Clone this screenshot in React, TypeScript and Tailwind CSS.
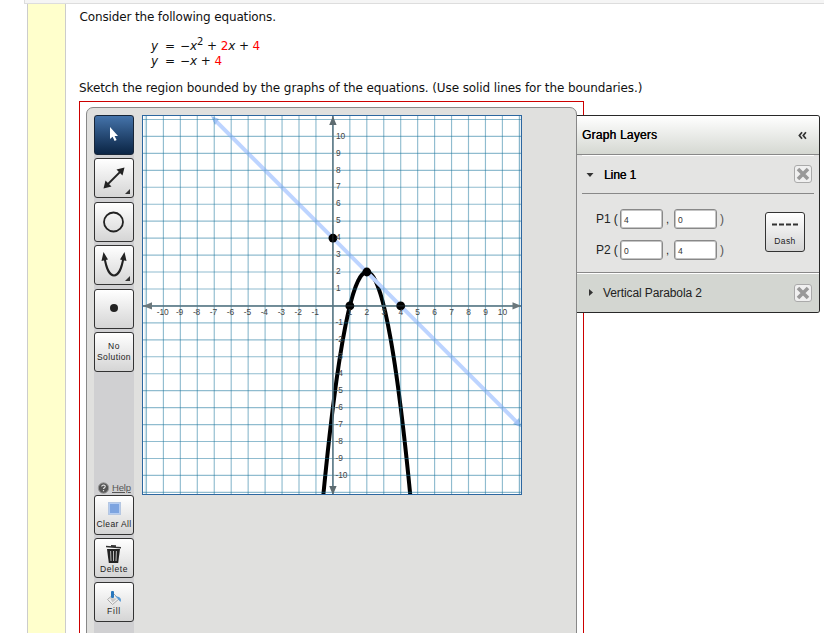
import React from "react";

const STEP = 16.95;
const CX = 190.9;
const CY = 190.9;
const px = (x: number) => CX + x * STEP;
const py = (y: number) => CY - y * STEP;
const units = Array.from({ length: 23 }, (_, i) => i - 11);

function parabola() {
  let d = "";
  for (let x = -0.6; x <= 4.62; x += 0.05) {
    d += `${d ? "L" : "M"}${px(x).toFixed(2)} ${py(-2 * (x - 2) * (x - 2) + 2).toFixed(2)}`;
  }
  return d;
}

function Graph() {
  return (
    <div className="h-[380px] w-[380px] shrink-0 overflow-hidden border border-[#2d67a0] bg-white">
      <svg width="378" height="378" viewBox="1 1 378 378" className="block">
        <path d={parabola()} fill="none" stroke="#000" strokeWidth="4" />
        <path d={`M${px(-7)} ${py(11)}L${px(11)} ${py(-7)}`} stroke="#c4d9ff" strokeWidth="3.8" />
        <path d="M69 1l8 3-4 6zM379 312l-8-3 6-6z" fill="#8fb5ee" fillOpacity="0.8" />
        {units.map((u) => (
          <g key={u} stroke="#16749b" strokeOpacity="0.48" strokeWidth="1.15">
            <path d={`M${px(u)} 0V380`} />
            <path d={`M0 ${py(u)}H380`} />
          </g>
        ))}
        <path d="M3.200 0V380M378 0V380" stroke="#16749b" strokeOpacity="0.25" />
        <path d={`M${px(-7)} ${py(11)}L${px(11)} ${py(-7)}`} stroke="#b4ceff" strokeOpacity="0.4" strokeWidth="3.8" />
        <g stroke="#5b7681" strokeWidth="1.5" fill="none">
          <path d={`M0 ${CY}H380M${CX} 0V380`} />
        </g>
        <path d="M1 190.9l9-3.7v7.4zM379.5 190.9l-9-3.7v7.4z" fill="#6b777c" />
        <path d="M190.9 1l-3.7 9h7.4zM190.9 380l-3.7-9h7.4z" fill="#5d6b70" />
        <g fill="#000">
          <circle cx={px(0)} cy={py(4)} r="4.4" />
          <circle cx={px(1)} cy={py(0)} r="4.4" />
          <circle cx={px(2)} cy={py(2)} r="4.4" />
          <circle cx={px(4)} cy={py(0)} r="4.4" />
        </g>
        <path d={`M${CX} 110V136M145 ${CY}H265`} stroke="#5b7681" strokeOpacity="0.4" />
        <g className="font-['Liberation_Sans',Arial,sans-serif] text-[8.4px]" fill="#444">
          {units
            .filter((u) => u !== 0 && Math.abs(u) < 11)
            .map((u) => (
              <g key={u}>
                <text x={px(u) - (u < 0 ? 0.8 : 0)} y="200.3" textAnchor="middle">
                  {u}
                </text>
                <text x={u < 0 ? 193.5 : 194} y={py(u) + 2.2}>
                  {u}
                </text>
              </g>
            ))}
        </g>
      </svg>
    </div>
  );
}

function Tool({ children, active, corner }: { children?: React.ReactNode; active?: boolean; corner?: boolean }) {
  return (
    <button
      className={`relative flex h-10 w-10 shrink-0 flex-col items-center justify-center rounded-[3px] border ${
        active
          ? "border-[#182638] bg-linear-to-b from-[#4574ab] to-[#0b2545]"
          : "border-[#333] bg-linear-to-b from-white to-[#d5d5d5]"
      }`}
    >
      {children}
      {corner && (
        <svg className="absolute bottom-[3px] right-[3px]" width="5" height="5">
          <path d="M5 0V5H0z" fill="#333" />
        </svg>
      )}
    </button>
  );
}

function Label({ children, className = "" }: { children: React.ReactNode; className?: string }) {
  return (
    <span className={`whitespace-nowrap font-['Liberation_Sans',Arial,sans-serif] text-[8.5px] leading-[11px] text-[#222] ${className}`}>
      {children}
    </span>
  );
}

function Toolbar() {
  return (
    <div className="flex h-[526px] w-10 shrink-0 flex-col bg-[#d0d0d2] pb-[19px]">
      <div className="flex flex-col gap-[3.4px]">
        <Tool active>
          <svg width="10" height="16" viewBox="0 0 10 16">
            <path d="M1 0v12l2.600-2.200L5.600 14l2-.9-2-4.100H9z" fill="#fff" />
          </svg>
        </Tool>
        <Tool corner>
          <svg width="24" height="24" viewBox="0 0 24 24">
            <path d="M4 20L20 4" stroke="#222" strokeWidth="1.8" />
            <path d="M1.500 22.500l2-8 6 6zM22.500 1.500l-8 2 6 6z" fill="#222" />
          </svg>
        </Tool>
        <Tool>
          <svg width="24" height="24">
            <circle cx="11.5" cy="12" r="9.5" fill="none" stroke="#222" strokeWidth="1.8" />
          </svg>
        </Tool>
        <Tool corner>
          <svg width="26" height="26" viewBox="0 0 26 26">
            <path d="M3.500 5C7 29.500 19 29.500 22.500 5" fill="none" stroke="#222" strokeWidth="2" />
            <path d="M2.500 0L.5 9l6.500-1.500zM23.500 0L19 7.500l6.500 1.500z" fill="#222" />
          </svg>
        </Tool>
        <Tool>
          <span className="-mt-px h-2 w-2 rounded-full bg-[#222]" />
        </Tool>
        <Tool>
          <Label className="mt-[1px] tracking-[0.5px]">No</Label>
          <Label className="tracking-[0.4px]">Solution</Label>
        </Tool>
      </div>
      <div className="mt-auto flex h-[14px] items-center gap-[2px] pl-[3px] font-['Liberation_Sans',Arial,sans-serif] text-[9.5px] tracking-[-0.2px] text-[#555]">
        <svg width="13" height="12" viewBox="0 0 12 12">
          <circle cx="6" cy="6" r="5.200" fill="#555" stroke="#999" />
          <path d="M4.200 4.600C4.200 2.500 8 2.700 7.700 4.700C7.500 5.800 6 5.700 6 7.100M6 8.100v1.200" stroke="#ddd" strokeWidth="1.200" fill="none" />
        </svg>
        <span className="underline underline-offset-1">Help</span>
      </div>
      <div className="flex flex-col">
        <Tool>
          <svg className="mt-[2px]" width="13" height="13">
            <rect x=".5" y=".5" width="12" height="12" fill="#b5cdf2" stroke="#b5c7e2" />
            <rect x="2" y="2" width="9" height="9" fill="#7da4e0" />
          </svg>
          <Label className="mt-[4px] tracking-[0.35px]">Clear All</Label>
        </Tool>
        <div className="mb-1 mt-[3px] flex">
          <Tool>
            <svg className="mt-[3px] -ml-[2px]" width="15" height="19" viewBox="0 0 15 19">
              <path d="M0 2.500l15 1.300M5 1.600L10 2" stroke="#333" strokeWidth="1.400" />
              <path d="M1 5h13l-1.800 14H2.800z" fill="#222" />
              <path d="M4.600 7l.4 10M7.500 7v10M10.400 7L10 17" stroke="#bbb" strokeWidth="1" />
            </svg>
            <Label className="mt-px tracking-[0.6px]">Delete</Label>
          </Tool>
        </div>
        <Tool>
          <svg className="mt-[3px]" width="16" height="16" viewBox="0 0 16 16">
            <path d="M1.500 9.500L8 4l5 5-6.500 5.500z" fill="#eee" stroke="#aaa" />
            <path d="M4 8l7 .5-4.500 4z" fill="#c8c8c8" />
            <path d="M9 6l4 1q3 2 1.500 5L11 8z" fill="#5a9bd5" />
            <rect x="5" y="1" width="3" height="7" rx="1" fill="#2877bd" />
          </svg>
          <Label className="tracking-[0.8px]">Fill</Label>
        </Tool>
      </div>
    </div>
  );
}

function CloseButton() {
  return (
    <button className="flex h-[18px] w-[18px] items-center justify-center rounded-[3px] border border-[#aaa] bg-[#f0f0f0]">
      <svg width="14" height="14" viewBox="0 0 14 14" className="shrink-0">
        <path d="M2 2l10 10M12 2L2 12" stroke="#999" strokeWidth="3.600" />
      </svg>
    </button>
  );
}

function PointRow({ name, x, y }: { name: string; x: string; y: string }) {
  const box =
    "flex h-5 w-[43px] items-center rounded-[3px] border border-[#888] bg-white pl-[3px] pt-px text-[8.5px] text-[#333] shadow-[inset_0_0_0_1px_#c4c4c4]";
  return (
    <div className="flex h-5 items-center">
      <span className="w-6 whitespace-pre">{name} (</span>
      <span className={box}>{x}</span>
      <span className="w-[11px] pl-[3px] text-[11px]">,</span>
      <span className={box}>{y}</span>
      <span className="pl-[3px] text-[#555]">)</span>
    </div>
  );
}

function Layers() {
  return (
    <div className="mt-2 h-[198px] w-[243px] shrink-0 overflow-hidden rounded-r-[3px] border border-l-0 border-[#282828] bg-[#e4e4e3] font-['Liberation_Sans',Arial,sans-serif] text-[12px] text-[#222]">
      <div className="flex h-[39px] items-center justify-between border-b border-[#888] bg-linear-to-b from-white to-[#d5d8d2] pl-[5px] pr-[12px] text-[12px] tracking-[0.2px] text-black [text-shadow:0.3px_0_0_black]">
        <span>Graph Layers</span>
        <svg width="9" height="9" viewBox="0 0 10 9" fill="none" stroke="#333" strokeWidth="1.900">
          <path d="M4.500 .8L1.500 4.500l3 3.700M8.800 .8L5.800 4.500l3 3.700" />
        </svg>
      </div>
      <div className="mx-[5px] flex h-[39px] items-center border-b border-t border-b-[#888] border-t-white pr-[2px]">
        <svg className="ml-[4px] mr-[10px]" width="8" height="4">
          <path d="M.5 0H7.500L4 4z" fill="#333" />
        </svg>
        <span className="flex-1 text-black [text-shadow:0.3px_0_0_black]">Line 1</span>
        <div className="-mt-[2px]">
          <CloseButton />
        </div>
      </div>
      <div className="flex h-[79px] items-center border-b border-[#888] pl-[19px]">
        <div className="flex flex-col gap-[11px] pt-[3px]">
          <PointRow name="P1" x="4" y="0" />
          <PointRow name="P2" x="0" y="4" />
        </div>
        <div className="-mt-[2px] ml-auto mr-[14px]">
          <Tool>
            <svg className="mt-[6px]" width="26" height="3">
              <path d="M0 1.500H26" stroke="#333" strokeWidth="2" strokeDasharray="5 2" />
            </svg>
            <Label className="mt-[10px] tracking-[0.4px]">Dash</Label>
          </Tool>
        </div>
      </div>
      <div className="flex h-10 items-center border-t border-white bg-[#d3d6d1] pb-[2px] pl-[12px] pr-[7px]">
        <svg className="mr-[10px]" width="4" height="7">
          <path d="M0 0V7L4 3.500z" fill="#333" />
        </svg>
        <span className="flex-1 pt-px tracking-[-0.1px]">Vertical Parabola 2</span>
        <CloseButton />
      </div>
    </div>
  );
}

function Num({ children }: { children: React.ReactNode }) {
  return <span className="text-[#f00]">{children}</span>;
}

export default function App() {
  return (
    <div className="flex h-[633px] w-[824px] flex-col overflow-hidden bg-white font-['DejaVu_Sans',Verdana,sans-serif] text-[12px] leading-4 tracking-[-0.1px] text-[#111]">
      <div className="ml-6 h-1 shrink-0 border-b border-l border-[#ddd] bg-[#f5f5f5]" />
      <div className="flex min-h-0 flex-1 pl-[27px]">
        <div className="w-[39px] shrink-0 border-x border-[#ccc] bg-[#ffffcc]" />
        <div className="ml-[13px] flex shrink-0 flex-col">
          <p className="mt-[5px] h-4 whitespace-nowrap pl-[0.5px] tracking-[-0.14px]">Consider the following equations.</p>
          <div className="ml-[72px] mt-[13px] h-[31px] whitespace-nowrap">
            <div className="flex h-4">
              <i className="w-[14px]">y</i>
              <span className="w-[15px]">=</span>
              <span>
                −<i>x</i>
                <sup className="-top-[5px] text-[10px] leading-none">2</sup> + <Num>2</Num>
                <i>x</i> + <Num>4</Num>
              </span>
            </div>
            <div className="-mt-px flex h-4">
              <i className="w-[14px]">y</i>
              <span className="w-[15px]">=</span>
              <span>
                −<i>x</i> + <Num>4</Num>
              </span>
            </div>
          </div>
          <p className="mt-[11px] h-4 whitespace-nowrap">
            Sketch the region bounded by the graphs of the equations. (Use solid lines for the boundaries.)
          </p>
          <div className="mt-[5px] flex h-[600px] w-[505px] border border-[#c00] pl-[6px] pt-[5px]">
            <div className="flex h-[620px] w-[491px] shrink-0 gap-2 rounded-t-[7px] border border-[#888] bg-[#e0e0de] pl-[7px] pt-[7px]">
              <Toolbar />
              <Graph />
            </div>
            <Layers />
          </div>
        </div>
      </div>
    </div>
  );
}
